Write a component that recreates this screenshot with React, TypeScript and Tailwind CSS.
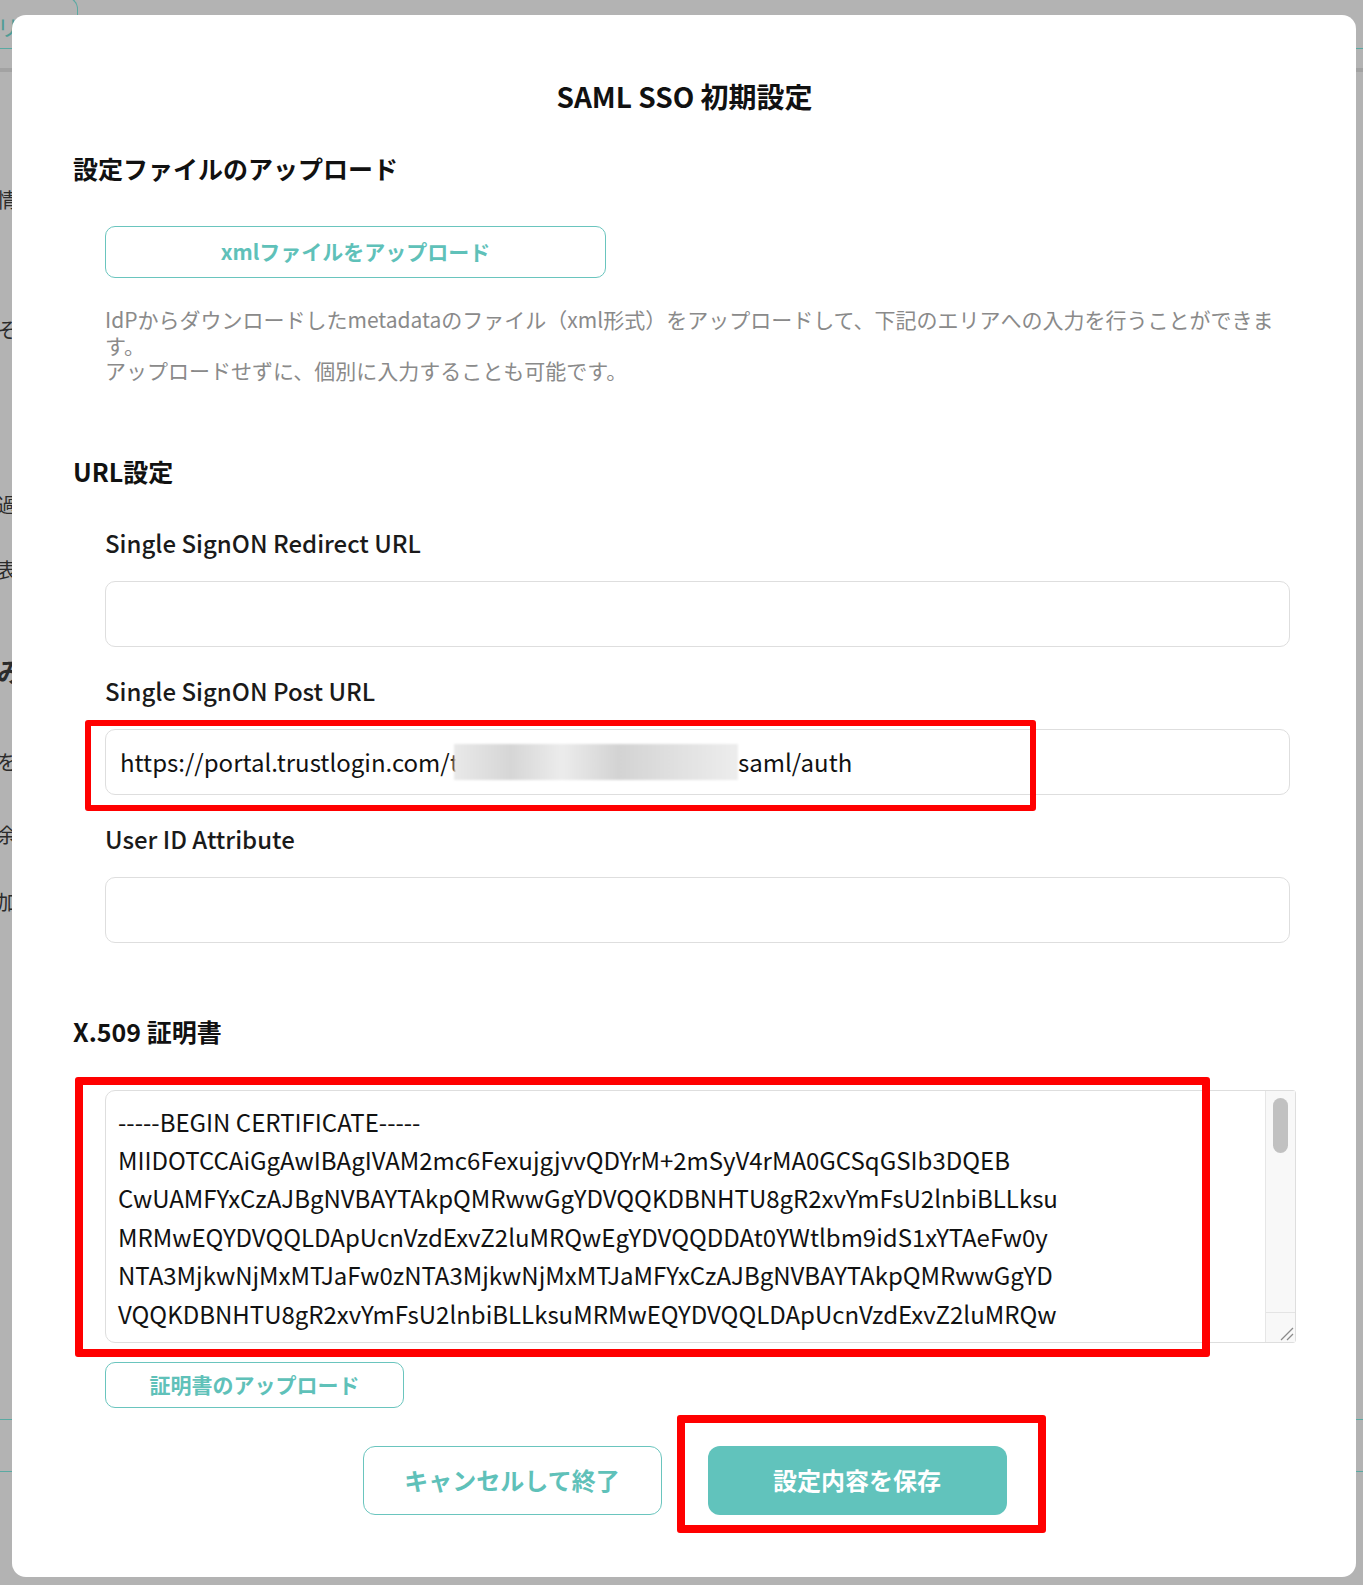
const teal = "text-[#5fc1b9]";

const certLines = [
  "-----BEGIN CERTIFICATE-----",
  "MIIDOTCCAiGgAwIBAgIVAM2mc6FexujgjvvQDYrM+2mSyV4rMA0GCSqGSIb3DQEB",
  "CwUAMFYxCzAJBgNVBAYTAkpQMRwwGgYDVQQKDBNHTU8gR2xvYmFsU2lnbiBLLksu",
  "MRMwEQYDVQQLDApUcnVzdExvZ2luMRQwEgYDVQQDDAt0YWtlbm9idS1xYTAeFw0y",
  "NTA3MjkwNjMxMTJaFw0zNTA3MjkwNjMxMTJaMFYxCzAJBgNVBAYTAkpQMRwwGgYD",
  "VQQKDBNHTU8gR2xvYmFsU2lnbiBLLksuMRMwEQYDVQQLDApUcnVzdExvZ2luMRQw",
  "EgYDVQQDDAt0YWtlbm9idS1xYTCCASIwDQYJKoZIhvcNAQEBBQADggEPADCCAQoC",
];

// page behind the dialog, only a sliver of it shows at the left edge
function Backdrop() {
  return (
    <div className="absolute inset-0 flex flex-col overflow-hidden text-[20px] leading-[24px] text-[#2b2b2b]">
      <div className="flex h-[49px] border-b border-[#5aa9a2]">
        <div className="-ml-[20px] -mt-[3px] h-[52px] w-[98px] rounded-tr-[12px] border border-b-0 border-[#5aa9a2] pl-[16px] pt-[16px] text-[22px] text-[#4f9c95]">
          リリ
        </div>
      </div>
      <div className="mt-[19px] h-[4px] bg-[#a2a2a2]" />
      <div className="-ml-[3px] flex flex-col">
        <span className="mt-[116px]">情報</span>
        <span className="mt-[106px]">そそ</span>
        <span className="mt-[151px]">過去</span>
        <span className="mt-[41px]">表示</span>
        <span className="mt-[74px] text-[26px] font-bold leading-[30px]">み</span>
        <span className="mt-[64px]">をを</span>
        <span className="mt-[49px]">余白</span>
        <span className="mt-[43px]">加加</span>
      </div>
      <div className="mt-[505px] h-px bg-[#5aa9a2]" />
      <div className="mt-[51px] h-px bg-[#5aa9a2]" />
    </div>
  );
}

function Field({ label, children }: { label: string; children?: React.ReactNode }) {
  return (
    <div className="mt-[27px] flex flex-col first:mt-[38px]">
      <label className="text-[24px] font-medium leading-[34px] text-[#1a1a1a]">{label}</label>
      {children ?? <div className="mt-[21px] h-[66px] rounded-[10px] border border-[#dedede] bg-white" />}
    </div>
  );
}

function RedMark({ className }: { className: string }) {
  return <div className={"pointer-events-none absolute rounded-[3px] border-[#ff0000] " + className} />;
}

export default function App() {
  return (
    <div className="relative h-[1585px] w-full overflow-hidden bg-[#b3b3b3] pl-[12px] pt-[15px] font-['Noto_Sans_CJK_JP',sans-serif]">
      <Backdrop />

      <div className="relative z-10 flex h-[1562px] w-[1344px] flex-col rounded-[14px] bg-white pl-[61px] pr-[60px] pt-[59px] text-[#111]">
        <h2 className="text-center text-[28px] font-bold leading-[44px]">SAML SSO 初期設定</h2>

        <h3 className="mt-[33px] text-[25px] font-bold leading-[34px]">設定ファイルのアップロード</h3>
        <div className="ml-[32px] flex flex-col">
          <button className={"mt-[41px] h-[52px] w-[501px] rounded-[10px] border border-[#6ac5be] text-[21px] font-bold " + teal}>
            xmlファイルをアップロード
          </button>
          <p className="mt-[29px] w-[1178px] text-[21px] leading-[25.5px] text-[#8a8a8a]">
            IdPからダウンロードしたmetadataのファイル（xml形式）をアップロードして、下記のエリアへの入力を行うことができます。
            <br />
            アップロードせずに、個別に入力することも可能です。
          </p>
        </div>

        <h3 className="mt-[70px] text-[25px] font-bold leading-[34px]">URL設定</h3>
        <div className="ml-[32px] mr-[6px] flex flex-col">
          <Field label="Single SignON Redirect URL" />
          <Field label="Single SignON Post URL">
            <div className="relative mt-[21px] flex h-[66px] items-center rounded-[10px] border border-[#dedede] bg-white pl-[14px] text-[24px] text-[#111]">
              <span>https://portal.trustlogin.com/t</span>
              <span className="-ml-[5px] h-[36px] w-[284px] bg-[linear-gradient(90deg,#e9e9e9_0%,#d6d6d6_20%,#ececec_38%,#d3d3d3_58%,#e0e0e0_78%,#ededed_100%)] blur-[1px]" />
              <span>saml/auth</span>
              <RedMark className="-left-[21px] -top-[10px] h-[91px] w-[951px] border-[6px]" />
            </div>
          </Field>
          <Field label="User ID Attribute" />
        </div>

        <h3 className="mt-[71px] text-[25px] font-bold leading-[34px]">X.509 証明書</h3>
        <div className="relative ml-[32px] mt-[42px] flex h-[253px] rounded-l-[10px] rounded-r-[3px] border border-[#dedede] bg-white">
          <div className="flex-1 overflow-hidden whitespace-pre pl-[12px] pt-[12px] text-[24px] leading-[38.4px] text-[#111]">
            {certLines.join("\n")}
          </div>
          <div className="flex w-[30px] flex-col border-l border-[#e6e6e6] bg-[#f8f8f8]">
            <div className="ml-[7px] mt-[7px] h-[55px] w-[15px] rounded-full bg-[#c1c1c1]" />
            <div className="flex-1" />
            <div className="flex h-[30px] items-end justify-end border-t border-[#e4e4e4] p-[1px]">
              <svg width="16" height="16" viewBox="0 0 16 16" stroke="#8a8a8a" strokeWidth="1.2">
                <line x1="3" y1="15" x2="15" y2="3" />
                <line x1="9" y1="15" x2="15" y2="9" />
              </svg>
            </div>
          </div>
          <RedMark className="-left-[31px] -top-[14px] h-[280px] w-[1135px] border-[8px]" />
        </div>

        <button className={"ml-[32px] mt-[19px] h-[46px] w-[299px] rounded-[10px] border border-[#6ac5be] text-[21px] font-bold " + teal}>
          証明書のアップロード
        </button>

        <div className="mt-[38px] flex justify-center gap-[46px]">
          <button className={"h-[69px] w-[299px] rounded-[12px] border border-[#6ac5be] bg-white text-[24px] font-bold " + teal}>
            キャンセルして終了
          </button>
          <div className="relative">
            <button className="h-[69px] w-[299px] rounded-[12px] bg-[#61c3bc] text-[24px] font-bold text-white">
              設定内容を保存
            </button>
            <RedMark className="-left-[31px] -top-[31px] h-[118px] w-[369px] border-[8px]" />
          </div>
        </div>
      </div>
    </div>
  );
}
